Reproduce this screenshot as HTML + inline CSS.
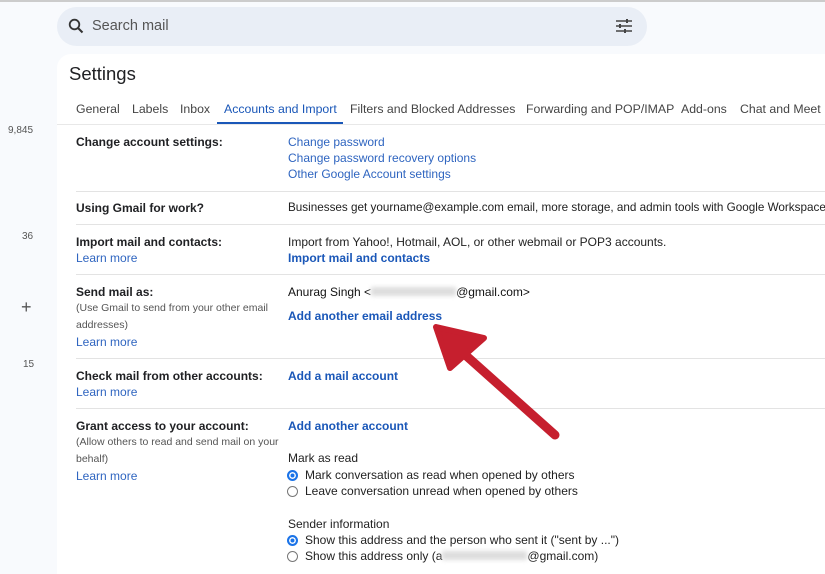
<!DOCTYPE html>
<html><head><style>
body{margin:0;width:825px;height:570px;overflow:hidden;background:#f8fafd;font-family:"Liberation Sans",sans-serif;position:relative;color:#222}
div,span{position:absolute;white-space:nowrap}
.t{font-size:12px}
.b{font-weight:bold;color:#202124}
.l{color:#2f65c0}
.lb{color:#1a57b8;font-weight:bold}
.g{color:#555;font-size:10.5px}
.hr{left:76px;right:0;height:1px;background:#e3e3e3}
.tab{top:102px;font-size:12.3px;color:#444}
.r{width:9px;height:9px;border-radius:50%;border:1px solid #777}
.rs{width:7px;height:7px;border-radius:50%;border:2px solid #1a73e8;background:#1a73e8;box-shadow:inset 0 0 0 1.5px #fff}
</style></head><body>
<div style="left:0;top:0;width:825px;height:2px;background:#ccc"></div>
<div style="left:57px;top:7px;width:590px;height:39px;border-radius:20px;background:#e9eef6"></div>
<svg style="position:absolute;left:68px;top:18px" width="16" height="16" viewBox="0 0 16 16"><circle cx="6.5" cy="6.5" r="4.8" fill="none" stroke="#333" stroke-width="1.8"/><path d="M10 10L14.5 14.5" stroke="#333" stroke-width="2"/></svg>
<div style="left:92px;top:18px;font-size:14.5px;color:#555">Search mail</div>
<svg style="position:absolute;left:615px;top:18px" width="18" height="16" viewBox="0 0 18 16"><g stroke="#444" stroke-width="1.6"><path d="M1 3H17M1 8H17M1 13H17"/></g><g stroke="#444" stroke-width="2"><path d="M12 1V5M5 6V10M10 11V15"/></g></svg>
<div style="left:57px;top:54px;width:780px;height:520px;background:#fff;border-radius:14px 0 0 0"></div>
<div style="left:8px;top:125px;font-size:10px;color:#555">9,845</div>
<div style="left:22px;top:231px;font-size:10px;color:#555">36</div>
<div style="left:21px;top:297px;font-size:18px;color:#555">+</div>
<div style="left:23px;top:359px;font-size:10px;color:#555">15</div>
<div style="left:69px;top:63px;font-size:18.5px;color:#202124">Settings</div>
<div class="tab" style="left:76px">General</div>
<div class="tab" style="left:132px">Labels</div>
<div class="tab" style="left:180px">Inbox</div>
<div class="tab" style="left:224px;color:#1a57b8">Accounts and Import</div>
<div style="left:217px;top:122px;width:126px;height:3px;background:#1a57b8"></div>
<div class="tab" style="left:350px">Filters and Blocked Addresses</div>
<div class="tab" style="left:526px">Forwarding and POP/IMAP</div>
<div class="tab" style="left:681px">Add-ons</div>
<div class="tab" style="left:740px">Chat and Meet</div>
<div style="left:57px;right:0;top:124px;height:1px;background:#e8e8e8"></div>

<div class="t b" style="left:76px;top:135px">Change account settings:</div>
<div class="t l" style="left:288px;top:135px">Change password</div>
<div class="t l" style="left:288px;top:151px">Change password recovery options</div>
<div class="t l" style="left:288px;top:167px">Other Google Account settings</div>
<div class="hr" style="top:191px"></div>
<div class="t b" style="left:76px;top:201px">Using Gmail for work?</div>
<div class="t" style="left:288px;top:201px;font-size:11.7px">Businesses get yourname@example.com email, more storage, and admin tools with Google Workspace.</div>
<div class="hr" style="top:224px"></div>
<div class="t b" style="left:76px;top:235px">Import mail and contacts:</div>
<div class="t l" style="left:76px;top:251px">Learn more</div>
<div class="t" style="left:288px;top:235px">Import from Yahoo!, Hotmail, AOL, or other webmail or POP3 accounts.</div>
<div class="t lb" style="left:288px;top:251px">Import mail and contacts</div>
<div class="hr" style="top:274px"></div>
<div class="t b" style="left:76px;top:285px">Send mail as:</div>
<div class="g" style="left:76px;top:302px">(Use Gmail to send from your other email</div>
<div class="g" style="left:76px;top:319px">addresses)</div>
<div class="t l" style="left:76px;top:335px">Learn more</div>
<div class="t b" style="left:288px;top:285px;font-weight:normal;color:#111">Anurag Singh &lt;<span style="position:relative;display:inline-block;width:85px;height:9px;background:#ddd;filter:blur(2px)"></span>@gmail.com&gt;</div>
<div class="t lb" style="left:288px;top:309px">Add another email address</div>
<div class="hr" style="top:358px"></div>
<div class="t b" style="left:76px;top:369px">Check mail from other accounts:</div>
<div class="t l" style="left:76px;top:385px">Learn more</div>
<div class="t lb" style="left:288px;top:369px">Add a mail account</div>
<div class="hr" style="top:408px"></div>
<div class="t b" style="left:76px;top:419px">Grant access to your account:</div>
<div class="g" style="left:76px;top:436px">(Allow others to read and send mail on your</div>
<div class="g" style="left:76px;top:453px">behalf)</div>
<div class="t l" style="left:76px;top:469px">Learn more</div>
<div class="t lb" style="left:288px;top:419px">Add another account</div>
<div class="t" style="left:288px;top:451px">Mark as read</div>
<div class="rs" style="left:287px;top:470px"></div>
<div class="t" style="left:305px;top:468px">Mark conversation as read when opened by others</div>
<div class="r" style="left:287px;top:486px"></div>
<div class="t" style="left:305px;top:484px">Leave conversation unread when opened by others</div>
<div class="t" style="left:288px;top:517px">Sender information</div>
<div class="rs" style="left:287px;top:535px"></div>
<div class="t" style="left:305px;top:533px">Show this address and the person who sent it ("sent by ...")</div>
<div class="r" style="left:287px;top:551px"></div>
<div class="t" style="left:305px;top:549px">Show this address only (a<span style="position:relative;display:inline-block;width:85px;height:9px;background:#ddd;filter:blur(2px)"></span>@gmail.com)</div>

<svg style="position:absolute;left:0;top:0" width="825" height="570"><path d="M555 435L462 352" stroke="#c61f2e" stroke-width="9" stroke-linecap="round"/><path d="M436 327L484 338L450 368Z" fill="#c61f2e" stroke="#c61f2e" stroke-width="6" stroke-linejoin="round"/></svg>
</body></html>
